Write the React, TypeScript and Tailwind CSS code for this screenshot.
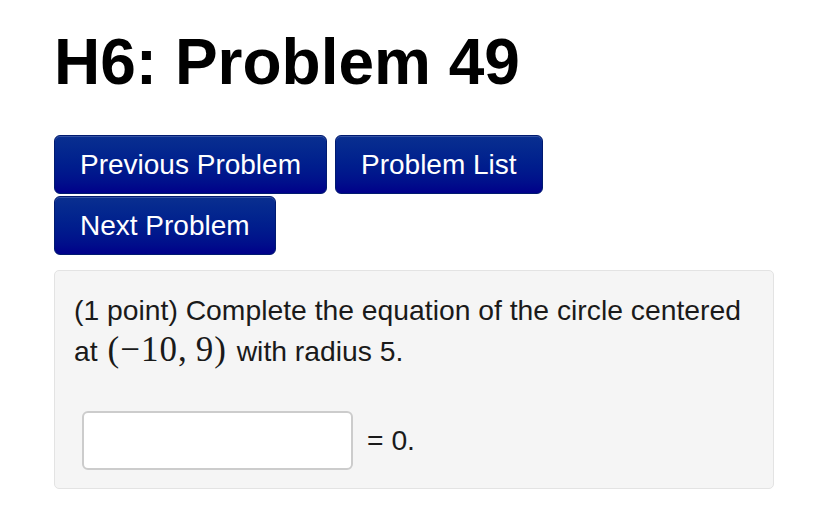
import React from 'react';

const sans = { fontFamily: '"Liberation Sans", Arial, sans-serif' };

function NavButton({ label }: { label: string }) {
  return (
    <button
      className="h-[59px] rounded-[6px] border border-[#001a70] bg-gradient-to-b from-[#0a2f90] to-[#00008a] px-[25px] text-[28px] leading-[40px] text-white shadow-[inset_0_1px_0_rgba(255,255,255,0.18)]"
    >
      {label}
    </button>
  );
}

export default function App() {
  return (
    <div className="min-h-[505px] w-[828px] bg-white pl-[54px] pt-[26px] text-[#1a1a1a]" style={sans}>
      <h1 className="text-[64px] font-bold leading-[72px] text-black">H6: Problem 49</h1>

      <div className="mt-[37px] flex w-[500px] flex-wrap gap-x-[8px] gap-y-[2px]">
        <NavButton label="Previous Problem" />
        <NavButton label="Problem List" />
        <NavButton label="Next Problem" />
      </div>

      <div className="mt-[15px] h-[219px] w-[720px] rounded-[5px] border border-[#e3e3e3] bg-[#f5f5f5] px-[19px] pt-[19px]">
        <p className="text-[28.3px] leading-[40px]">
          (1 point) Complete the equation of the circle centered
          <br />
          at{' '}
          <span
            className="mx-[2px] text-[35px] leading-[40px] tracking-[1px]"
            style={{ fontFamily: '"Liberation Serif", "Times New Roman", serif' }}
          >
            (−10,&thinsp;9)
          </span>{' '}
          with radius 5.
        </p>

        <div className="mt-[40px] flex items-center text-[28.3px]">
          <input
            type="text"
            className="ml-[8px] h-[59px] w-[271px] rounded-[6px] border-2 border-[#cccccc] bg-white"
          />
          <span className="ml-[14px]">= 0.</span>
        </div>
      </div>
    </div>
  );
}
